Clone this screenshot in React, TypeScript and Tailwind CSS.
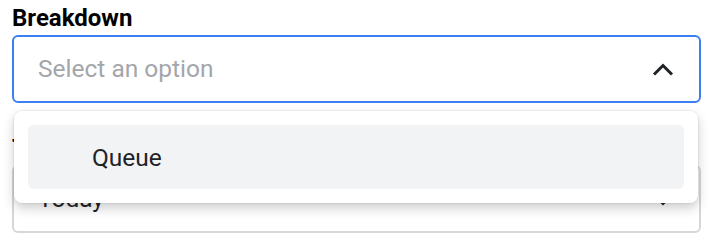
import React from 'react';

function ChevronUp() {
  return (
    <svg width="22" height="13" viewBox="0 0 22 13" fill="none">
      <path d="M2 11.5 L11 2.5 L20 11.5" stroke="#1f2328" strokeWidth="3" />
    </svg>
  );
}

function ChevronDown() {
  return (
    <svg width="22" height="13" viewBox="0 0 22 13" fill="none">
      <path d="M2 1.5 L11 10.5 L20 1.5" stroke="#1f2328" strokeWidth="3" />
    </svg>
  );
}

export default function App() {
  ///vars
  const options = ['Queue'];

  return (
    <div className="min-h-screen bg-white px-3 font-['Roboto',sans-serif]">
      {/* breakdown field */}
      <div className="w-[689px]">
        <label className="block pt-[4px] pb-[3px] text-[24px] font-bold leading-[28px] text-black">
          Breakdown
        </label>
        <div className="relative">
          <button className="flex h-[68px] w-full items-center justify-between rounded-md border-2 border-[#3b7ff2] bg-white pl-6 pr-[25px]">
            <span className="text-[24.5px] text-[#a3a6ab]">Select an option</span>
            <ChevronUp />
          </button>

          <div className="absolute left-[2px] top-[76px] z-10 w-[684px] rounded-lg bg-white p-[14px] shadow-[0_5px_12px_rgba(0,0,0,0.2)] ring-1 ring-black/5">
            {options.map((option) => (
              <div
                key={option}
                className="flex h-[64px] items-center rounded-md bg-[#f2f3f5] pl-16 pt-[3px] text-[24.5px] text-[#1f2328]"
              >
                {option}
              </div>
            ))}
          </div>
        </div>
      </div>

      {/* timeframe field */}
      <div className="mt-[27px] w-[689px]">
        <label className="block pt-[4px] pb-[3px] text-[24px] font-bold leading-[28px] text-black">
          Timeframe
        </label>
        <button className="flex h-[68px] w-full items-center justify-between rounded-md border-2 border-[#d5d7da] bg-white pl-6 pr-[25px]">
          <span className="text-[24.5px] text-[#1f2328]">Today</span>
          <ChevronDown />
        </button>
      </div>
    </div>
  );
}
